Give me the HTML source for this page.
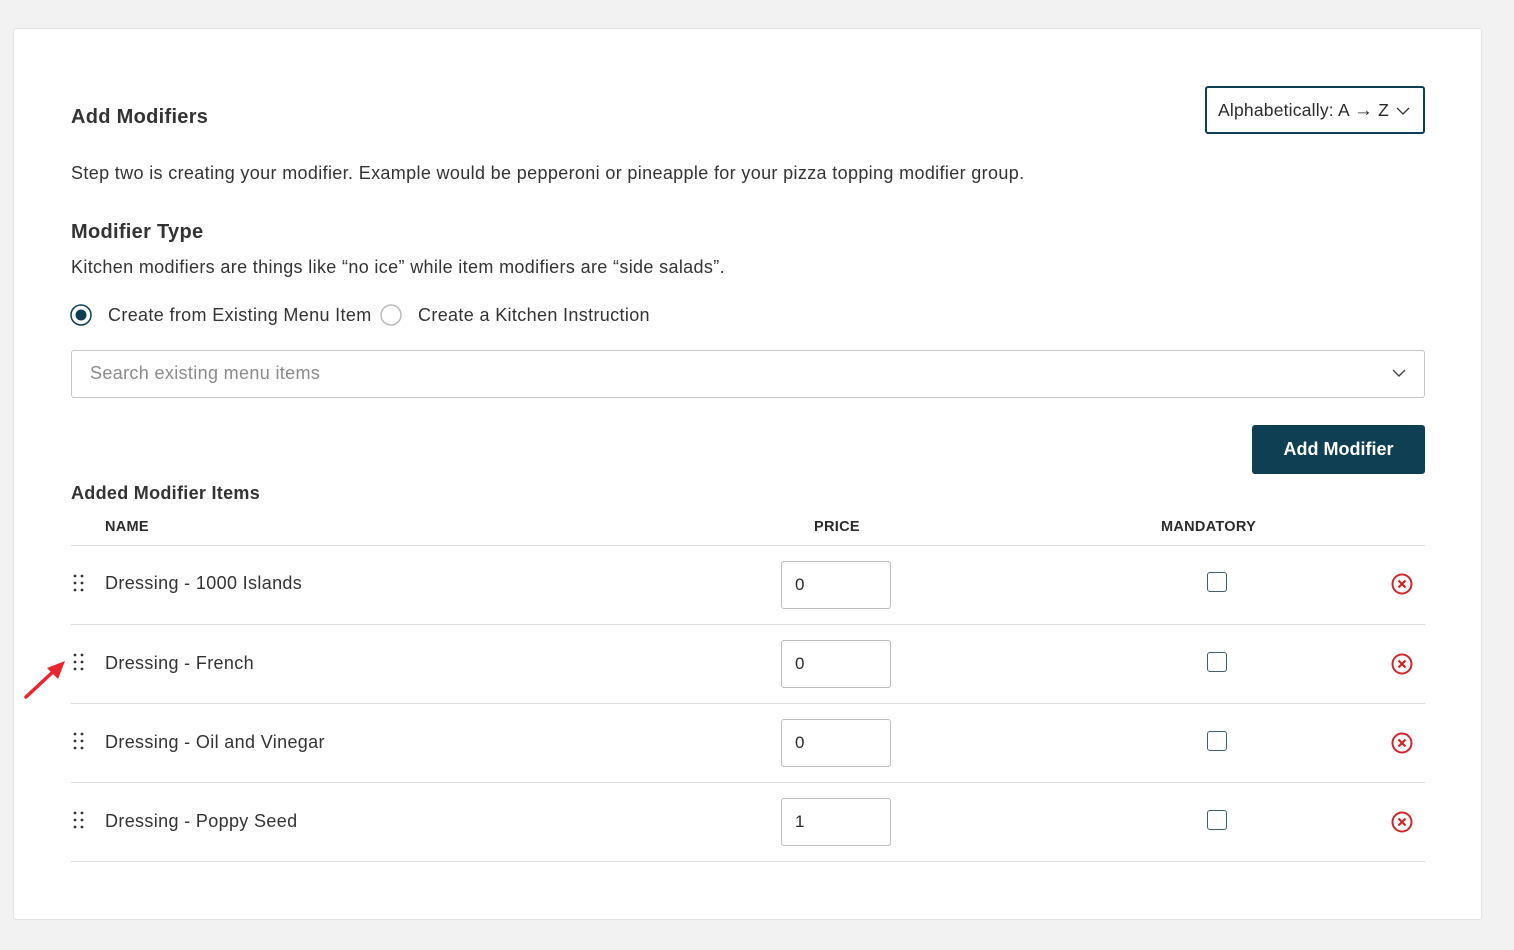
<!DOCTYPE html>
<html><head><style>
*{box-sizing:border-box;margin:0;padding:0}
body{width:1514px;height:950px;background:#f2f2f2;font-family:"Liberation Sans",sans-serif;color:#2b2b2b;position:relative;overflow:hidden}
.card{position:absolute;left:13px;top:28px;width:1469px;height:892px;background:#fff;border:1px solid #e2e2e2;border-radius:3px}
.a{position:absolute;white-space:nowrap}
.h{font-weight:bold;font-size:20px;color:#333;letter-spacing:0.3px}
.t{font-size:18px;color:#333;letter-spacing:0.35px}
.line{position:absolute;left:71px;width:1354px;height:1px;background:#dedede}
.inp{position:absolute;left:781px;width:110px;height:48px;border:1px solid #bdbdbd;border-radius:3px;font-size:17px;padding:13px 0 0 13px}
.cb{position:absolute;left:1207px;width:20px;height:20px;border:1.5px solid #3d5f6e;border-radius:3px}
.dots{position:absolute;left:73px;width:12px;height:18px}
</style></head><body>
<div class="card"></div>
<div class="a h" style="left:71px;top:106px">Add Modifiers</div>
<div class="a" style="left:1205px;top:86px;width:220px;height:48px;border:2px solid #0e3f52;border-radius:3px;font-size:17.5px;padding:12px 0 0 11px;letter-spacing:0.2px">Alphabetically: A <span style="font-size:19px">→</span> Z<svg style="position:absolute;left:189px;top:19px" width="14" height="9"><path d="M1 1l6 6 6-6" fill="none" stroke="#333" stroke-width="1.3"/></svg></div>
<div class="a t" style="left:71px;top:163px">Step two is creating your modifier. Example would be pepperoni or pineapple for your pizza topping modifier group.</div>
<div class="a h" style="left:71px;top:221px">Modifier Type</div>
<div class="a t" style="left:71px;top:257px">Kitchen modifiers are things like “no ice” while item modifiers are “side salads”.</div>
<svg class="a" style="left:70px;top:304px" width="24" height="24"><circle cx="11" cy="11" r="10" fill="none" stroke="#0e3f52" stroke-width="1.5"/><circle cx="11" cy="11" r="5.5" fill="#0e3f52"/></svg>
<div class="a t" style="left:108px;top:305px">Create from Existing Menu Item</div>
<svg class="a" style="left:380px;top:304px" width="24" height="24"><circle cx="11" cy="11" r="10" fill="none" stroke="#bbb" stroke-width="1.5"/></svg>
<div class="a t" style="left:418px;top:305px">Create a Kitchen Instruction</div>
<div class="a" style="left:71px;top:350px;width:1354px;height:48px;border:1px solid #c6c6c6;border-radius:3px;font-size:18px;letter-spacing:0.35px;color:#8a8a8a;padding:12px 0 0 18px">Search existing menu items<svg style="position:absolute;right:18px;top:18px" width="14" height="9"><path d="M1 1l6 6 6-6" fill="none" stroke="#444" stroke-width="1.4"/></svg></div>
<div class="a" style="left:1252px;top:425px;width:173px;height:49px;background:#0e3f52;border-radius:3px;color:#fff;font-weight:bold;font-size:18px;text-align:center;line-height:49px">Add Modifier</div>
<div class="a" style="left:71px;top:483px;font-size:18px;font-weight:bold;color:#333;letter-spacing:0.3px">Added Modifier Items</div>
<div class="a" style="left:105px;top:519px;font-size:14.5px;font-weight:bold;letter-spacing:0.3px">NAME</div>
<div class="a" style="left:814px;top:519px;font-size:14.5px;font-weight:bold;letter-spacing:0.3px">PRICE</div>
<div class="a" style="left:1161px;top:519px;font-size:14.5px;font-weight:bold;letter-spacing:0.3px">MANDATORY</div>
<div class="line" style="top:545px"></div>
<div class="line" style="top:624px"></div>
<div class="line" style="top:703px"></div>
<div class="line" style="top:782px"></div>
<div class="line" style="top:861px"></div>

<svg class="dots" style="top:574px" viewBox="0 0 12 18"><g fill="#333"><circle cx="2" cy="2" r="1.4"/><circle cx="9" cy="2" r="1.4"/><circle cx="2" cy="9" r="1.4"/><circle cx="9" cy="9" r="1.4"/><circle cx="2" cy="16" r="1.4"/><circle cx="9" cy="16" r="1.4"/></g></svg>
<div class="a t" style="left:105px;top:573px">Dressing - 1000 Islands</div>
<div class="inp" style="top:561px">0</div><div class="cb" style="top:572px"></div>
<svg class="a" style="left:1391px;top:573px" width="22" height="22"><circle cx="11" cy="11" r="9.5" fill="none" stroke="#d0262a" stroke-width="2"/><path d="M7.5 7.5l7 7M14.5 7.5l-7 7" stroke="#d0262a" stroke-width="2.2"/></svg>

<svg class="dots" style="top:653px" viewBox="0 0 12 18"><g fill="#333"><circle cx="2" cy="2" r="1.4"/><circle cx="9" cy="2" r="1.4"/><circle cx="2" cy="9" r="1.4"/><circle cx="9" cy="9" r="1.4"/><circle cx="2" cy="16" r="1.4"/><circle cx="9" cy="16" r="1.4"/></g></svg>
<div class="a t" style="left:105px;top:653px">Dressing - French</div>
<div class="inp" style="top:640px">0</div><div class="cb" style="top:652px"></div>
<svg class="a" style="left:1391px;top:653px" width="22" height="22"><circle cx="11" cy="11" r="9.5" fill="none" stroke="#d0262a" stroke-width="2"/><path d="M7.5 7.5l7 7M14.5 7.5l-7 7" stroke="#d0262a" stroke-width="2.2"/></svg>

<svg class="dots" style="top:732px" viewBox="0 0 12 18"><g fill="#333"><circle cx="2" cy="2" r="1.4"/><circle cx="9" cy="2" r="1.4"/><circle cx="2" cy="9" r="1.4"/><circle cx="9" cy="9" r="1.4"/><circle cx="2" cy="16" r="1.4"/><circle cx="9" cy="16" r="1.4"/></g></svg>
<div class="a t" style="left:105px;top:732px">Dressing - Oil and Vinegar</div>
<div class="inp" style="top:719px">0</div><div class="cb" style="top:731px"></div>
<svg class="a" style="left:1391px;top:732px" width="22" height="22"><circle cx="11" cy="11" r="9.5" fill="none" stroke="#d0262a" stroke-width="2"/><path d="M7.5 7.5l7 7M14.5 7.5l-7 7" stroke="#d0262a" stroke-width="2.2"/></svg>

<svg class="dots" style="top:811px" viewBox="0 0 12 18"><g fill="#333"><circle cx="2" cy="2" r="1.4"/><circle cx="9" cy="2" r="1.4"/><circle cx="2" cy="9" r="1.4"/><circle cx="9" cy="9" r="1.4"/><circle cx="2" cy="16" r="1.4"/><circle cx="9" cy="16" r="1.4"/></g></svg>
<div class="a t" style="left:105px;top:811px">Dressing - Poppy Seed</div>
<div class="inp" style="top:798px">1</div><div class="cb" style="top:810px"></div>
<svg class="a" style="left:1391px;top:811px" width="22" height="22"><circle cx="11" cy="11" r="9.5" fill="none" stroke="#d0262a" stroke-width="2"/><path d="M7.5 7.5l7 7M14.5 7.5l-7 7" stroke="#d0262a" stroke-width="2.2"/></svg>

<svg class="a" style="left:20px;top:655px" width="50" height="46"><path d="M6 42L36 14" stroke="#e8262b" stroke-width="3.5" stroke-linecap="round"/><path d="M45 6L27 13L38 24Z" fill="#e8262b"/></svg>
</body></html>
